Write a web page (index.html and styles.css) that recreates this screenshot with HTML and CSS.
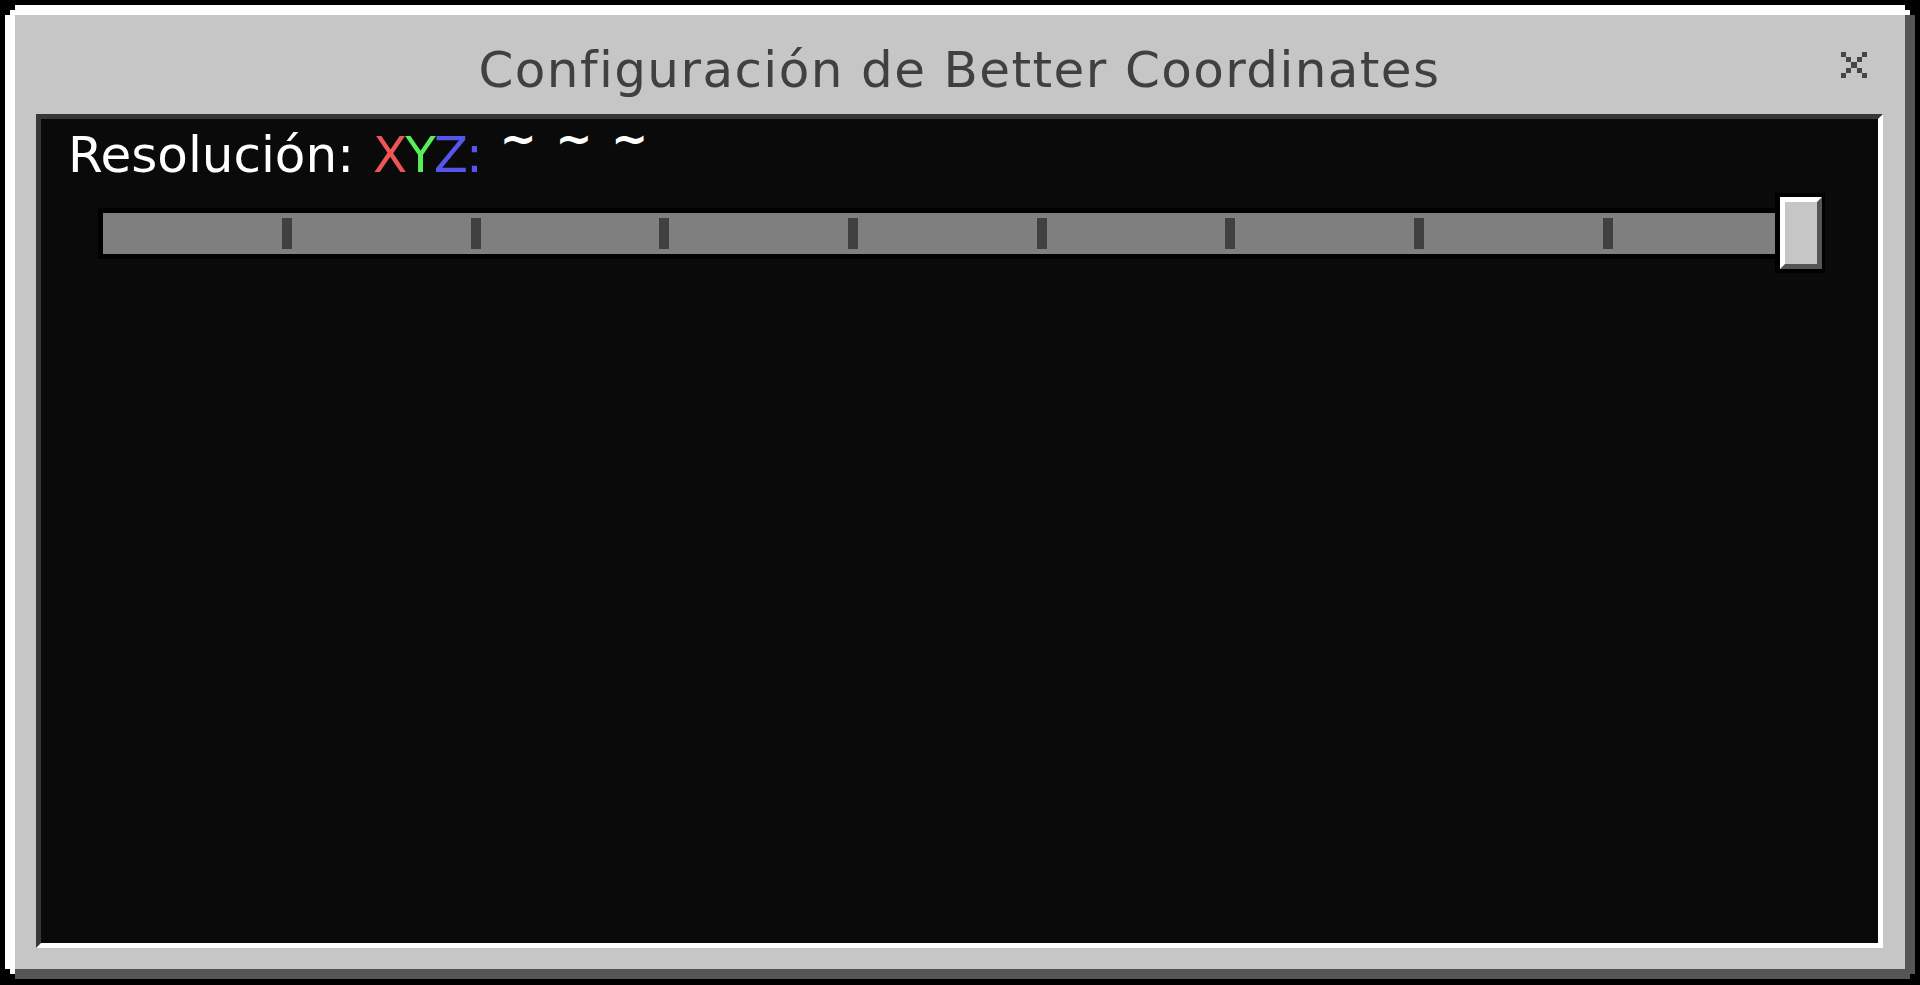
FILE: index.html
```html
<!DOCTYPE html>
<html lang="es">
<head>
<meta charset="utf-8">
<title>Configuración de Better Coordinates</title>
<link rel="stylesheet" href="styles.css">
</head>
<body>
<div class="panel">
  <div class="header">
    <h1 class="title">Configuración de Better Coordinates</h1>
    <svg class="close" viewBox="0 0 5 5" shape-rendering="crispEdges" aria-label="Cerrar">
      <rect x="0" y="0" width="1" height="1"/>
      <rect x="4" y="0" width="1" height="1"/>
      <rect x="1" y="1" width="1" height="1"/>
      <rect x="3" y="1" width="1" height="1"/>
      <rect x="2" y="2" width="1" height="1"/>
      <rect x="1" y="3" width="1" height="1"/>
      <rect x="3" y="3" width="1" height="1"/>
      <rect x="0" y="4" width="1" height="1"/>
      <rect x="4" y="4" width="1" height="1"/>
    </svg>
  </div>
  <div class="screen">
    <div class="label"><span>Resolución:</span> <span class="xyz"><span class="c-x">X</span><span class="c-y">Y</span><span class="c-z">Z:</span></span> <span class="tilde">~</span> <span class="tilde">~</span> <span class="tilde">~</span></div>
    <div class="slider">
      <div class="track">
        <div class="tick"></div>
        <div class="tick"></div>
        <div class="tick"></div>
        <div class="tick"></div>
        <div class="tick"></div>
        <div class="tick"></div>
        <div class="tick"></div>
        <div class="tick"></div>
      </div>
      <div class="handle-frame"><div class="handle"></div></div>
    </div>
  </div>
</div>
</body>
</html>
```

FILE: styles.css
```css
html, body {
  margin: 0;
  padding: 0;
  background: #000;
}

body {
  width: 1920px;
  height: 985px;
  overflow: hidden;
  font-family: "DejaVu Sans", "Noto Sans", sans-serif;
}

.panel {
  margin: 5px 0 0 5px;
  width: 1910px;
  height: 974px;
  box-sizing: border-box;
  padding: 0 32px 31px 31px;
  background: #c6c6c6;
  box-shadow: inset 10px 10px 0 #ffffff, inset -10px -10px 0 #555555;
  clip-path: polygon(10px 0, 1900px 0, 1900px 5px, 1905px 5px, 1905px 10px, 1910px 10px,
                     1910px 969px, 1905px 969px, 1905px 974px,
                     10px 974px, 10px 969px, 5px 969px, 5px 964px, 0 964px,
                     0 10px, 5px 10px, 5px 5px, 10px 5px);
  display: flex;
  flex-direction: column;
}

.header {
  height: 109px;
  box-sizing: border-box;
  padding-top: 40px;
  display: grid;
  grid-template-columns: 1fr auto 1fr;
  align-items: start;
  flex: none;
}

.title {
  grid-column: 2;
  margin: 0;
  font-size: 50px;
  line-height: 50px;
  font-weight: normal;
  color: #404040;
  letter-spacing: 1.4px;
  white-space: nowrap;
}

.close {
  grid-column: 3;
  justify-self: end;
  width: 26px;
  height: 26px;
  margin: 7px 16px 0 0;
  fill: #454545;
}

.screen {
  flex: 1;
  box-sizing: border-box;
  border: 5px solid;
  border-color: #373737 #ffffff #ffffff #373737;
  background: #0a0a0a;
  padding: 11px 0 0 27px;
}

.label {
  font-size: 50px;
  line-height: 50px;
  color: #ffffff;
  white-space: nowrap;
  word-spacing: 3px;
}

.xyz {
  letter-spacing: -2px;
}

.c-x { color: #ee5656; }
.c-y { color: #58ee58; }
.c-z { color: #5656ec; }

.tilde {
  font-size: 44px;
  font-weight: bold;
  line-height: 0;
  vertical-align: 18px;
}

.slider {
  display: flex;
  align-items: center;
  margin: 13px 0 0 30px;
}

.track {
  width: 1677px;
  height: 51px;
  box-sizing: border-box;
  border: 5px solid #000;
  border-right: 0;
  background: #7f7f7f;
  display: flex;
  align-items: center;
  gap: 178.7px;
  padding-left: 179px;
}

.tick {
  flex: none;
  width: 10px;
  height: 31px;
  background: #404040;
}

.handle-frame {
  border: solid #000;
  border-width: 4px 3px 4px 5px;
}

.handle {
  width: 42px;
  height: 72px;
  box-sizing: border-box;
  background: #c6c6c6;
  border: 5px solid;
  border-color: #ffffff #555555 #555555 #ffffff;
}
```
